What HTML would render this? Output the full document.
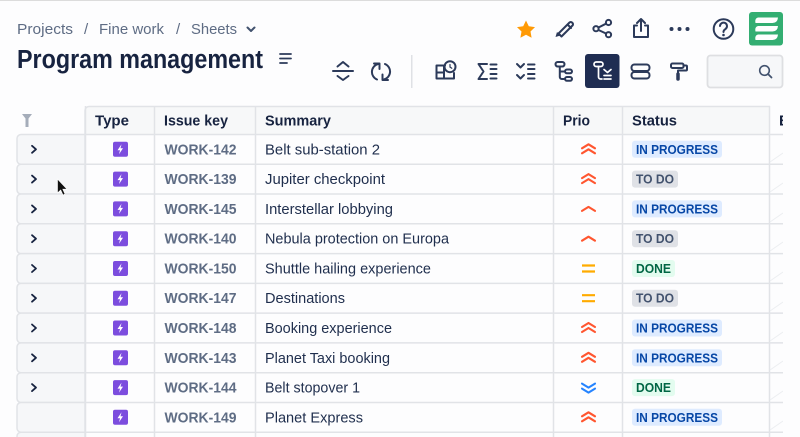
<!DOCTYPE html>
<html><head><meta charset="utf-8"><style>
html,body{margin:0;padding:0;background:#fdfdfe;width:800px;height:437px;overflow:hidden}
svg{display:block;font-family:"Liberation Sans",sans-serif}
.w{font-size:15px;font-weight:bold;fill:#5e6c84}
.s{font-size:15px;fill:#1f2e4d}
.h{font-size:15px;font-weight:bold;fill:#172340}
.l{font-size:12.5px;font-weight:bold}
.ib{fill:#0747a6}.td{fill:#42526e}.dn{fill:#006644}
.i{fill:none;stroke:#2c3a5a;stroke-width:2;stroke-linecap:round;stroke-linejoin:round}
.g{stroke:#e1e3e7;stroke-width:1.5;fill:none}
.c{fill:none;stroke:#172340;stroke-width:1.8;stroke-linecap:round;stroke-linejoin:round}
.r{fill:none;stroke:#ff5630;stroke-width:2.1;stroke-linecap:round;stroke-linejoin:round}
.m{fill:none;stroke:#ffab00;stroke-width:2.2}
</style></head><body>
<svg width="800" height="437" viewBox="0 0 800 437" xmlns="http://www.w3.org/2000/svg">
<defs>
<g id="t"><rect x="113" y="-7.500" width="15" height="15" rx="2" fill="#7c4dde"/><path d="M121.500-5 117.500 1h2.500L119 5l4-6h-2.500z" fill="#fff"/></g>
<path id="x" class="c" d="M32-3.500 36 0l-4 3.500"/>
<g id="hi"><path class="r" d="M582-1 588.500-5 595-1M582 4 588.500 0 595 4"/></g>
<g id="hh"><path class="r" d="M582 2 588.500-2 595 2"/></g>
<g id="me"><path class="m" d="M582-3h13M582 3h13"/></g>
<g id="ip"><rect x="632" y="-8.500" width="90" height="17" rx="3" fill="#deebff"/><text class="l ib" x="636" y="4.500" textLength="82" lengthAdjust="spacingAndGlyphs">IN PROGRESS</text></g>
<g id="to"><rect x="632" y="-8.500" width="46" height="17" rx="3" fill="#dfe1e6"/><text class="l td" x="636" y="4.500" textLength="38" lengthAdjust="spacingAndGlyphs">TO DO</text></g>
<g id="do"><rect x="632" y="-8.500" width="43" height="17" rx="3" fill="#e3fcef"/><text class="l dn" x="636" y="4.500" textLength="35" lengthAdjust="spacingAndGlyphs">DONE</text></g>
</defs>
<rect width="800" height="437" fill="#fdfdfe"/>
<rect width="800" height="1" fill="#dcdcdc"/>

<!-- breadcrumbs -->
<g font-size="15" fill="#5e6c84">
<text x="17" y="34" textLength="56" lengthAdjust="spacingAndGlyphs">Projects</text>
<text x="84" y="34">/</text>
<text x="99" y="34" textLength="65" lengthAdjust="spacingAndGlyphs">Fine work</text>
<text x="176" y="34">/</text>
<text x="191" y="34" textLength="46" lengthAdjust="spacingAndGlyphs">Sheets</text>
</g>
<path d="M247.500 27.500 251 31l3.500-3.500" fill="none" stroke="#42526e" stroke-width="2" stroke-linecap="round" stroke-linejoin="round"/>
<text x="17" y="68" font-size="25.500" font-weight="bold" fill="#172340" textLength="246" lengthAdjust="spacingAndGlyphs">Program management</text>
<path d="M280 54h11M280 58.500h11M280 63h7" fill="none" stroke="#2c3a5a" stroke-width="1.800" stroke-linecap="round"/>

<!-- top actions -->
<path d="M526 20.500l2.800 5.700 6.200.9-4.500 4.400 1.100 6.200-5.600-2.900-5.600 2.900 1.100-6.200-4.500-4.400 6.200-.9z" fill="#ff9a05"/>
<path class="i" d="M558.500 33.500l11-11a1.800 1.800 0 0 1 2.500 0l.5.5a1.800 1.800 0 0 1 0 2.500l-11 11zM567.500 24.500l3.500 3.500"/>
<path d="M555.500 37l1.500-5 3.500 3.500z" fill="#2c3a5a"/>
<g class="i"><circle cx="596" cy="28.700" r="2.600"/><circle cx="608.500" cy="22.500" r="2.600"/><circle cx="608.500" cy="34.700" r="2.600"/><path d="M598.500 27.500l7.500-3.800M598.500 30l7.500 3.500"/></g>
<path class="i" d="M637 25.500h-3v11.500h14V25.500h-3M641 31V19.500M637 23l4-4 4 4"/>
<g fill="#2c3a5a"><circle cx="671.500" cy="29" r="2"/><circle cx="679.500" cy="29" r="2"/><circle cx="687.500" cy="29" r="2"/></g>
<circle cx="723.500" cy="29" r="9.800" class="i"/>
<path class="i" d="M720 26a3.500 3.500 0 1 1 5.500 3c-1.300.8-2 1.400-2 3"/><circle cx="723.500" cy="35" r="1.300" fill="#2c3a5a"/>
<rect x="749" y="12" width="34" height="33.500" rx="3" fill="#33ae72"/>
<path d="M758 17.500h20q-.5 5.500-5.500 5.500h-17q-1-4.500 2.500-5.500zM758 26h20q-.5 5.500-5.500 5.500h-17q-1-4.500 2.500-5.500zM758 34.500h20q-.5 5.500-5.500 5.500h-17q-1-4.500 2.500-5.500z" fill="#fff"/>

<!-- toolbar -->
<path class="i" d="M333 71h20M337.500 66.500l5.500-4.500 5.500 4.500M337.500 76l5.500 4 5.500-4"/>
<path class="i" d="M374 63.500h5.500V69M378 64a8.200 8.200 0 0 0-1 15.500M388 80h-5.500v-5.500M384 79.500a8.200 8.200 0 0 0 1-15.500"/>
<rect x="411" y="55" width="1.500" height="33" fill="#dfe1e5"/>
<g class="i"><path d="M445 65.500h-8.500v13h17.500V73M436.500 72.500h7.500M444 65.500v13"/><circle cx="450" cy="66.700" r="5.500"/></g><path d="M450 64.500v2.500l1.800 1.200" fill="none" stroke="#2c3a5a" stroke-width="1.200" stroke-linecap="round"/>
<path class="i" d="M487 64h-8.500l5 7.500-5 7.500h8.500M490.500 64.500h6M490.500 69h6M490.500 74h6M490.500 78.500h6"/>
<path class="i" d="M517 64l3.500 3.500 3.500-3.500M517 75l3.500 3.500L524 75M528 64.500h6.500M528 69h6.500M528 74h6.500M528 78.500h6.500"/>
<g class="i" stroke-width="1.700"><rect x="555.500" y="62" width="9" height="4.500" rx="2.200"/><path d="M559.800 66.500V77a2 2 0 0 0 2 2h3M559.800 71.500h5"/><rect x="565" y="69.500" width="7" height="3.800" rx="1.900"/><rect x="565" y="77" width="7" height="3.800" rx="1.900"/></g>
<rect x="585" y="54" width="34.500" height="34" rx="3" fill="#1f2d52"/>
<g fill="none" stroke="#fff" stroke-width="1.700" stroke-linecap="round" stroke-linejoin="round"><rect x="594" y="62" width="9" height="4.500" rx="2.200"/><path d="M598.500 66.500V77a2 2 0 0 0 2 2h1.500M604 69.500l3.500 3 3.500-3M604 75.500h7M604 79h7"/></g>
<g class="i"><rect x="631.500" y="64.500" width="18" height="6.500" rx="3"/><rect x="631.500" y="72" width="18" height="6.500" rx="3"/></g>
<g class="i" stroke-width="1.900"><rect x="671" y="63.500" width="12.500" height="4.500" rx="1.500"/><path d="M683.500 65.500h2.500a1 1 0 0 1 1 1v3a1 1 0 0 1-1 1h-8v3"/></g><path d="M678 74v5" fill="none" stroke="#2c3a5a" stroke-width="3.500" stroke-linecap="round"/>
<rect x="707.500" y="55.500" width="75" height="32" rx="3" fill="#f6f7f9" stroke="#dedfe2" stroke-width="1.800"/>
<circle cx="764.500" cy="70.500" r="4.800" fill="none" stroke="#42526e" stroke-width="1.600"/><path d="M768 74l3.500 3.500" stroke="#42526e" stroke-width="1.800" stroke-linecap="round"/>

<!-- filter -->
<path d="M22 114h10l-3.500 4.500V127h-3v-8.500z" fill="#a5adba"/>

<!-- table bg -->
<path d="M85 134.500v-24a4 4 0 0 1 4-4h681v28z" fill="#f7f8f9"/>
<g fill="#f6f7f9" stroke="#e1e3e7" stroke-width="1.500">
<path d="M85 134.500H21a4 4 0 0 0-4 4v21.800a4 4 0 0 0 4 4h64z"/>
<path d="M85 164.300H21a4 4 0 0 0-4 4v21.700a4 4 0 0 0 4 4h64z"/>
<path d="M85 194H21a4 4 0 0 0-4 4v21.800a4 4 0 0 0 4 4h64z"/>
<path d="M85 223.800H21a4 4 0 0 0-4 4v21.800a4 4 0 0 0 4 4h64z"/>
<path d="M85 253.600H21a4 4 0 0 0-4 4v21.800a4 4 0 0 0 4 4h64z"/>
<path d="M85 283.400H21a4 4 0 0 0-4 4v21.700a4 4 0 0 0 4 4h64z"/>
<path d="M85 313.100H21a4 4 0 0 0-4 4v21.800a4 4 0 0 0 4 4h64z"/>
<path d="M85 342.900H21a4 4 0 0 0-4 4v21.800a4 4 0 0 0 4 4h64z"/>
<path d="M85 372.700H21a4 4 0 0 0-4 4v21.800a4 4 0 0 0 4 4h64z"/>
<path d="M85 402.500H21a4 4 0 0 0-4 4v21.700a4 4 0 0 0 4 4h64z"/>
<path d="M85 432.200H21a4 4 0 0 0-4 4v3h68z"/>
</g>
<!-- grid -->
<path class="g" d="M85 134.500v-24a4 4 0 0 1 4-4h681"/>
<path class="g" d="M85 134.500H783M85 164.300H783M85 194H783M85 223.800H783M85 253.600H783M85 283.400H783M85 313.100H783M85 342.900H783M85 372.700H783M85 402.500H783M85 432.200H783"/>
<path class="g" d="M85.500 106v331M154.500 106v331M255.500 106v331M553.500 106v331M622.500 106v331M769.500 106v331"/>
<path d="M770 162l13-9M770 192l13-9M770 222l13-9M770 251l13-9M770 281l13-9M770 311l13-9M770 341l13-9M770 370l13-9M770 400l13-9M770 430l13-9" stroke="#eceef1" fill="none"/>

<!-- headers -->
<text class="h" x="95" y="125.500" textLength="34" lengthAdjust="spacingAndGlyphs">Type</text>
<text class="h" x="164" y="125.500" textLength="64" lengthAdjust="spacingAndGlyphs">Issue key</text>
<text class="h" x="265" y="125.500" textLength="66" lengthAdjust="spacingAndGlyphs">Summary</text>
<text class="h" x="563" y="125.500" textLength="27" lengthAdjust="spacingAndGlyphs">Prio</text>
<text class="h" x="632" y="125.500" textLength="45" lengthAdjust="spacingAndGlyphs">Status</text>
<text class="h" x="779" y="125.500">E</text>
<rect x="783" y="100" width="17" height="337" fill="#fdfdfe"/>

<!-- rows -->
<g transform="translate(0 149.300)"><use href="#x"/><use href="#t"/><text class="w" x="164.500" y="5" textLength="72" lengthAdjust="spacingAndGlyphs">WORK-142</text><text class="s" x="265" y="5" textLength="115" lengthAdjust="spacingAndGlyphs">Belt sub-station 2</text><use href="#hi"/><use href="#ip"/></g>
<g transform="translate(0 179.100)"><use href="#x"/><use href="#t"/><text class="w" x="164.500" y="5" textLength="72" lengthAdjust="spacingAndGlyphs">WORK-139</text><text class="s" x="265" y="5" textLength="120" lengthAdjust="spacingAndGlyphs">Jupiter checkpoint</text><use href="#hi"/><use href="#to"/></g>
<g transform="translate(0 208.900)"><use href="#x"/><use href="#t"/><text class="w" x="164.500" y="5" textLength="72" lengthAdjust="spacingAndGlyphs">WORK-145</text><text class="s" x="265" y="5" textLength="128" lengthAdjust="spacingAndGlyphs">Interstellar lobbying</text><use href="#hh"/><use href="#ip"/></g>
<g transform="translate(0 238.700)"><use href="#x"/><use href="#t"/><text class="w" x="164.500" y="5" textLength="72" lengthAdjust="spacingAndGlyphs">WORK-140</text><text class="s" x="265" y="5" textLength="184" lengthAdjust="spacingAndGlyphs">Nebula protection on Europa</text><use href="#hh"/><use href="#to"/></g>
<g transform="translate(0 268.500)"><use href="#x"/><use href="#t"/><text class="w" x="164.500" y="5" textLength="72" lengthAdjust="spacingAndGlyphs">WORK-150</text><text class="s" x="265" y="5" textLength="166" lengthAdjust="spacingAndGlyphs">Shuttle hailing experience</text><use href="#me"/><use href="#do"/></g>
<g transform="translate(0 298.200)"><use href="#x"/><use href="#t"/><text class="w" x="164.500" y="5" textLength="72" lengthAdjust="spacingAndGlyphs">WORK-147</text><text class="s" x="265" y="5" textLength="80" lengthAdjust="spacingAndGlyphs">Destinations</text><use href="#me"/><use href="#to"/></g>
<g transform="translate(0 328)"><use href="#x"/><use href="#t"/><text class="w" x="164.500" y="5" textLength="72" lengthAdjust="spacingAndGlyphs">WORK-148</text><text class="s" x="265" y="5" textLength="127" lengthAdjust="spacingAndGlyphs">Booking experience</text><use href="#hi"/><use href="#ip"/></g>
<g transform="translate(0 357.800)"><use href="#x"/><use href="#t"/><text class="w" x="164.500" y="5" textLength="72" lengthAdjust="spacingAndGlyphs">WORK-143</text><text class="s" x="265" y="5" textLength="125" lengthAdjust="spacingAndGlyphs">Planet Taxi booking</text><use href="#hi"/><use href="#ip"/></g>
<g transform="translate(0 387.600)"><use href="#x"/><use href="#t"/><text class="w" x="164.500" y="5" textLength="72" lengthAdjust="spacingAndGlyphs">WORK-144</text><text class="s" x="265" y="5" textLength="95" lengthAdjust="spacingAndGlyphs">Belt stopover 1</text><path d="M582-4 588.500 0 595-4M582 1 588.500 5 595 1" fill="none" stroke="#2684ff" stroke-width="2.100" stroke-linecap="round" stroke-linejoin="round"/><use href="#do"/></g>
<g transform="translate(0 417.300)"><use href="#t"/><text class="w" x="164.500" y="5" textLength="72" lengthAdjust="spacingAndGlyphs">WORK-149</text><text class="s" x="265" y="5" textLength="98" lengthAdjust="spacingAndGlyphs">Planet Express</text><use href="#hi"/><use href="#ip"/></g>

<!-- cursor -->
<path d="M57.500 179v14l3.200-3 2.300 5 2-1-2.200-4.800h4.200z" fill="#111" stroke="#fff" stroke-width=".6"/>
</svg>
</body></html>
